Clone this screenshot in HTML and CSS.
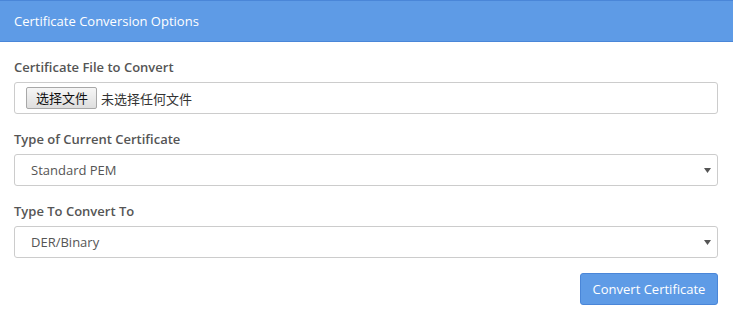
FILE: index.html
```html
<!DOCTYPE html>
<html>
<head>
  <title>Certificate Conversion</title>
  <link rel="stylesheet" href="styles.css">
</head>
<body>
  <div class="panel">
    <div class="panel-heading">Certificate Conversion Options</div>
    <form class="panel-body">
      <div class="form-group">
        <label>Certificate File to Convert</label>
        <div class="file-box">
          <span class="file-btn">选择文件</span>
          <span class="file-name">未选择任何文件</span>
        </div>
      </div>
      <div class="form-group">
        <label for="fromType">Type of Current Certificate</label>
        <select id="fromType" class="form-control">
          <option>Standard PEM</option>
          <option>DER/Binary</option>
          <option>P7B/PKCS#7</option>
          <option>PFX/PKCS#12</option>
        </select>
      </div>
      <div class="form-group">
        <label for="toType">Type To Convert To</label>
        <select id="toType" class="form-control">
          <option>DER/Binary</option>
          <option>Standard PEM</option>
          <option>P7B/PKCS#7</option>
          <option>PFX/PKCS#12</option>
        </select>
      </div>
      <div class="actions">
        <button type="button" class="btn-primary">Convert Certificate</button>
      </div>
    </form>
  </div>
</body>
</html>
```

FILE: styles.css
```css
* {
  box-sizing: border-box;
  margin: 0;
  padding: 0;
}

body {
  font-family: 'Open Sans', 'Noto Sans CJK SC', sans-serif;
  font-size: 13px;
  color: #555;
  background: #fff;
}

.panel-heading {
  height: 42px;
  padding: 0 14px;
  display: flex;
  align-items: center;
  background: #5e9be6;
  border-top: 1px solid #4a86d8;
  border-bottom: 1px solid #4a86d8;
  color: #fff;
  font-size: 13px;
}

.panel-body {
  padding: 16px 15px 0 14px;
}

.form-group {
  margin-bottom: 16px;
}

label {
  display: block;
  height: 18px;
  line-height: 18px;
  margin-bottom: 6px;
  font-weight: 600;
  color: #555;
}

.file-box,
.form-control {
  width: 100%;
  height: 32px;
  border: 1px solid #ccc;
  border-radius: 3px;
  background: #fff;
}

.file-box {
  display: flex;
  align-items: center;
  padding-left: 11px;
  font-family: 'Noto Sans CJK SC', sans-serif;
  font-size: 13px;
  color: #333;
}

.file-btn {
  height: 22px;
  line-height: 20px;
  padding: 0 8px 0 9px;
  border: 1px solid #a8a8a8;
  border-radius: 2px;
  background: linear-gradient(#f6f6f6, #dedede);
  color: #111;
}

.file-name {
  margin-left: 4px;
}

.form-control {
  padding: 0 28px 0 16px;
  font-family: 'Open Sans', sans-serif;
  font-size: 13px;
  color: #555;
  appearance: none;
  -webkit-appearance: none;
  background-image: url("data:image/svg+xml,%3Csvg xmlns='http://www.w3.org/2000/svg' width='7' height='5' viewBox='0 0 7 5'%3E%3Cpolygon points='0,0 7,0 3.5,5' fill='%23555'/%3E%3C/svg%3E");
  background-repeat: no-repeat;
  background-position: right 6px center;
}

.actions {
  display: flex;
  justify-content: flex-end;
  margin-top: -1px;
}

.btn-primary {
  width: 138px;
  height: 32px;
  border: 1px solid #4a86d8;
  border-radius: 3px;
  background: #5e9be6;
  color: #fff;
  font-family: 'Open Sans', sans-serif;
  font-size: 13px;
}
```
